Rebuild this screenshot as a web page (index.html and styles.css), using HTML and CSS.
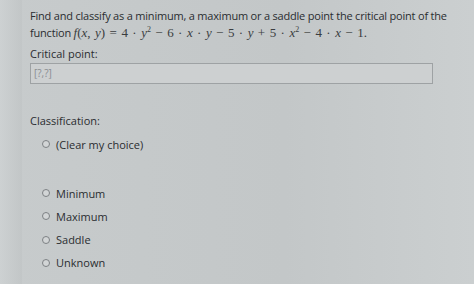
FILE: index.html
```html
<!DOCTYPE html>
<html>
<head>
<meta charset="utf-8">
<link rel="stylesheet" href="styles.css">
</head>
<body>
<div class="page">
  <div class="edge"></div>
  <div class="content">
    <p class="prompt">Find and classify as a minimum, a maximum or a saddle point the critical point of the function <span class="math"><i class="v">f</i>(<i class="v">x</i>, <i class="v">y</i>) = 4 · <i class="v">y</i><sup>2</sup> − 6 · <i class="v">x</i> · <i class="v">y</i> − 5 · <i class="v">y</i> + 5 · <i class="v">x</i><sup>2</sup> − 4 · <i class="v">x</i> − 1.</span></p>
    <div class="label">Critical point:</div>
    <div class="input">[?,?]</div>
    <div class="label class-label">Classification:</div>
    <ul class="choices">
      <li class="choice clear"><span class="radio"></span>(Clear my choice)</li>
      <li class="choice first"><span class="radio"></span>Minimum</li>
      <li class="choice"><span class="radio"></span>Maximum</li>
      <li class="choice"><span class="radio"></span>Saddle</li>
      <li class="choice"><span class="radio"></span>Unknown</li>
    </ul>
  </div>
</div>
</body>
</html>
```
FILE: styles.css
```css
html, body {
  margin: 0;
  padding: 0;
}
body {
  width: 474px;
  height: 284px;
  overflow: hidden;
  background: #c3c7c8;
  font-family: "Open Sans", "Noto Sans", sans-serif;
  color: #2a2d30;
}
.page {
  display: flex;
  height: 284px;
  background: linear-gradient(90deg, #c7cbcc 0%, #c3c7c8 60%, #cbcfd0 100%);
}
.edge {
  width: 22px;
  flex: none;
  background: linear-gradient(90deg, #cdd1d2, #c2c6c7);
}
.content {
  flex: 1;
  padding: 7px 0 0 8px;
}
.prompt {
  margin: 0;
  width: 430px;
  font-size: 11px;
  line-height: 17px;
  letter-spacing: -0.2px;
}
.math {
  font-family: "Liberation Serif", "DejaVu Serif", serif;
  font-size: 13px;
  letter-spacing: 0;
  word-spacing: 1.2px;
  color: #3a3d40;
}
.math .v {
  font-family: "Liberation Serif", "DejaVu Serif", serif;
  font-style: italic;
}
.math sup {
  font-size: 8px;
  line-height: 0;
  vertical-align: 5px;
}
.label {
  font-size: 11px;
  margin-top: 6px;
  line-height: 14px;
}
.input {
  margin-top: 2px;
  width: 398px;
  height: 19px;
  border: 1px solid #9ea2a4;
  background: #cdd0d1;
  box-sizing: content-box;
  font-size: 10px;
  line-height: 19px;
  padding-left: 3px;
  color: #8a8e91;
}
.class-label {
  margin-top: 30px;
}
.choices {
  list-style: none;
  margin: 0;
  padding: 0 0 0 12px;
}
.choice {
  display: flex;
  align-items: center;
  font-size: 11px;
  height: 14px;
  margin-top: 9px;
}
.choice.first {
  margin-top: 35px;
}
.choice + .choice:not(.first) {
  margin-top: 9.3px;
}
.radio {
  width: 6px;
  height: 6px;
  border: 1px solid #7d8184;
  border-radius: 50%;
  margin-right: 6px;
  background: #d2d5d6;
}
```
